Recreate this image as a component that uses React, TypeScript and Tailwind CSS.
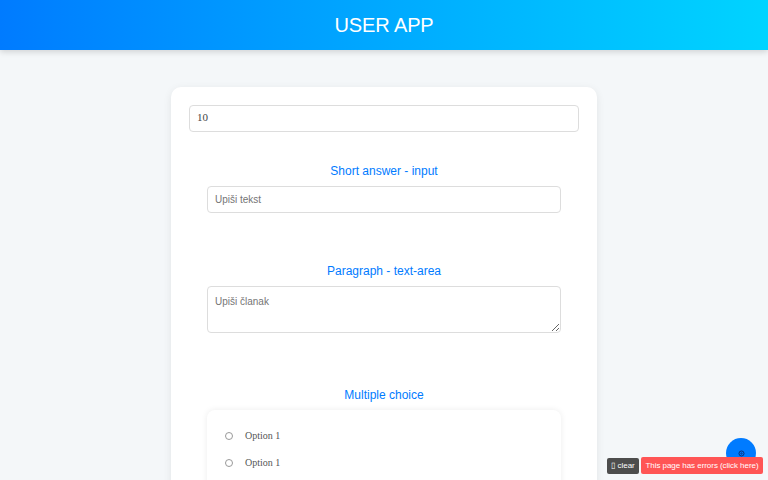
const sans = "font-['Liberation_Sans',Arial,sans-serif]"

function Radio({ label }: { label: string }) {
  return (
    <label className="flex items-center h-[27px] pl-[18px]">
      <span className="w-2 h-2 rounded-full border border-[#999] bg-white" />
      <span className="ml-3 text-[10px] text-[#555] font-['Liberation_Serif',serif]">{label}</span>
    </label>
  )
}

export default function App() {
  return (
    <div className={`h-[480px] overflow-hidden bg-[#f4f7f9] ${sans}`}>
      <header className="h-[50px] flex items-center justify-center bg-gradient-to-r from-[#007bff] to-[#00d4ff] shadow-[0_2px_6px_rgba(0,0,0,0.15)] relative">
        <h1 className="text-[20px] text-white font-normal tracking-[-0.1px]">USER APP</h1>
      </header>

      <main className="w-[426px] mx-auto mt-[37px] bg-white rounded-[10px] shadow-[0_2px_8px_rgba(0,0,0,0.08)] p-[18px] h-[500px]">
        <input
          defaultValue="10"
          className="block w-full h-[27px] px-[7px] pb-[3px] border border-[#ddd] rounded-[4px] text-[11px] text-[#444] font-['Liberation_Serif',serif] outline-none"
        />

        <section className="mt-[32px] px-[18px]">
          <h3 className="text-[12px] leading-[15px] text-[#007bff] text-center mb-[7px]">Short answer - input</h3>
          <input
            placeholder="Upiši tekst"
            className="block w-full h-[27px] px-[7px] border border-[#ddd] rounded-[4px] text-[10px] outline-none placeholder:text-[#757575]"
          />
        </section>

        <section className="mt-[51px] px-[18px]">
          <h3 className="text-[12px] leading-[15px] text-[#007bff] text-center mb-[7px]">Paragraph - text-area</h3>
          <textarea
            placeholder="Upiši članak"
            className="block w-full h-[47px] px-[7px] py-[7px] border border-[#ddd] rounded-[4px] text-[10px] outline-none placeholder:text-[#757575]"
          />
        </section>

        <section className="mt-[55px] px-[18px]">
          <h3 className="text-[12px] leading-[15px] text-[#007bff] text-center mb-[7px]">Multiple choice</h3>
          <div className="bg-white rounded-[8px] shadow-[0_0_6px_rgba(0,0,0,0.08)] pt-[12px] h-[200px]">
            <Radio label="Option 1" />
            <Radio label="Option 1" />
          </div>
        </section>
      </main>

      <button className="fixed right-[12px] bottom-[12px] w-[30px] h-[30px] flex items-center justify-center rounded-full bg-[#007bff]">
        <svg viewBox="0 0 10 10" className="w-[7px] h-[7px] fill-none stroke-[#0b2a6b]">
          <circle cx="5" cy="5" r="3.6" strokeWidth="1.3" />
          <circle cx="5" cy="5" r="1" strokeWidth="1" />
        </svg>
      </button>
      <div className="fixed right-[5px] bottom-[6px] flex items-center gap-[2px] text-[8px] text-white">
        <span className="h-[16px] w-[32px] flex items-center justify-center rounded-[2px] bg-[#4d4d4d]">▯ clear</span>
        <span className="h-[17px] w-[122px] flex items-center justify-center rounded-[2px] bg-[#ff5555] tracking-[-0.05px]">This page has errors (click here)</span>
      </div>
    </div>
  )
}
